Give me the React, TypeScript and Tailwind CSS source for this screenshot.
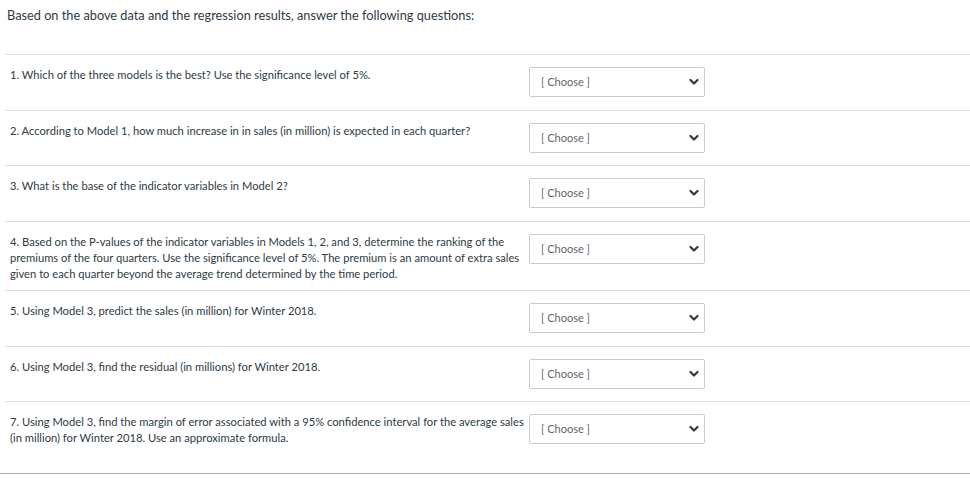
import React from "react";

const questions: string[] = [
  "1. Which of the three models is the best? Use the significance level of 5%.",
  "2. According to Model 1, how much increase in in sales (in million) is expected in each quarter?",
  "3. What is the base of the indicator variables in Model 2?",
  "4. Based on the P-values of the indicator variables in Models 1, 2, and 3, determine the ranking of the premiums of the four quarters. Use the significance level of 5%. The premium is an amount of extra sales given to each quarter beyond the average trend determined by the time period.",
  "5. Using Model 3, predict the sales (in million) for Winter 2018.",
  "6. Using Model 3, find the residual (in millions) for Winter 2018.",
  "7. Using Model 3, find the margin of error associated with a 95% confidence interval for the average sales (in million) for Winter 2018. Use an approximate formula.",
];

function Chevron() {
  return (
    <svg width="10" height="8" viewBox="0 0 10 8" className="shrink-0">
      <path d="M1.5 2 L5 5.5 L8.5 2" fill="none" stroke="#2d3b45" strokeWidth="2.2" strokeLinecap="round" strokeLinejoin="round" />
    </svg>
  );
}

function Select() {
  return (
    <div className="w-[176px] h-[30px] mb-[4px] shrink-0 border border-[#c7cdd1] rounded-[2px] bg-white flex items-center justify-between pl-[11px] pr-[5px]">
      <span className="text-[11px] text-[#5b6770] mt-[1px]">[ Choose ]</span>
      <Chevron />
    </div>
  );
}

export default function App() {
  return (
    <div className="w-[970px] h-[479px] bg-white text-[#2d3b45] font-['Lato','Open_Sans',sans-serif]">
      <div className="pl-[7px] pt-[7px] text-[12.75px] leading-[16px] h-[54px]">
        Based on the above data and the regression results, answer the following questions:
      </div>
      <div className="ml-[5px]">
        {questions.map((q, i) => (
          <div key={i} className="border-t border-[#dcdfe2] pt-3 pb-[8.5px] flex items-start">
            <div className={"w-[524px] pl-[5px] pr-[4px] text-[11.2px] leading-[16px] " + (i === 6 ? "pb-[18px]" : "")}>{q}</div>
            <Select />
          </div>
        ))}
      </div>
      <div className="border-t border-[#a5a9ac]" />
    </div>
  );
}
